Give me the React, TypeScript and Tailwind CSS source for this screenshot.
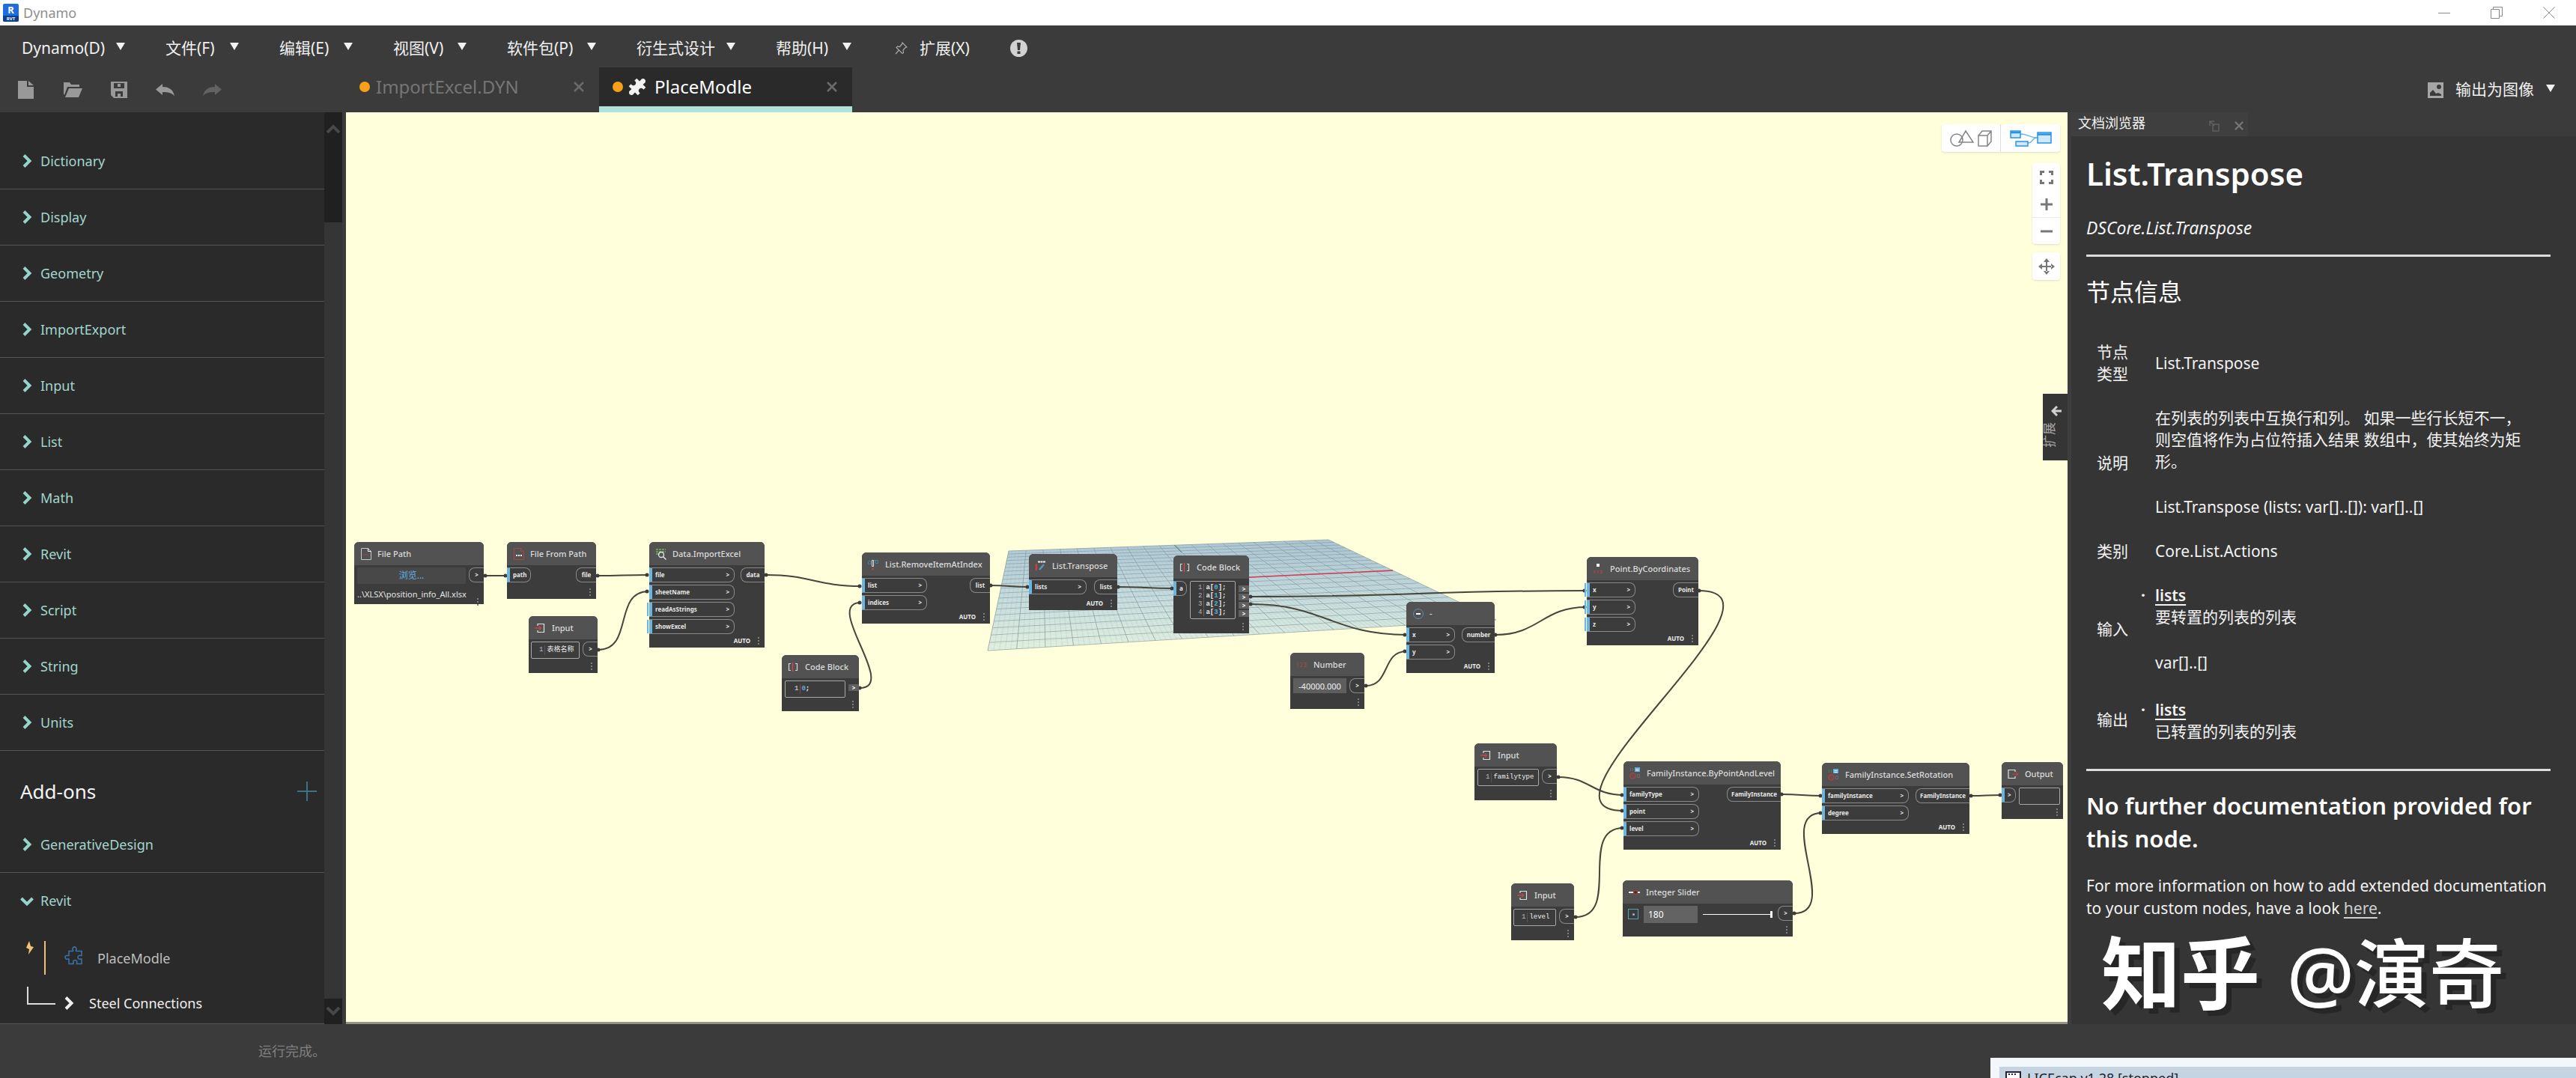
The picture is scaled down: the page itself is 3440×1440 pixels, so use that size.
import type { ReactNode } from 'react';
import clsx from 'clsx';

type Point = [number, number];

const MENUS = [
  { label: 'Dynamo(D)', width: 'min-w-[138px]' },
  { label: '文件(F)', width: 'min-w-[98px]' },
  { label: '编辑(E)', width: 'min-w-[98px]' },
  { label: '视图(V)', width: 'min-w-[98px]' },
  { label: '软件包(P)', width: 'min-w-[119px]' },
  { label: '衍生式设计', width: 'min-w-[132px]' },
  { label: '帮助(H)', width: 'min-w-[101px]' },
];

const LIBRARY = [
  'Dictionary', 'Display', 'Geometry', 'ImportExport', 'Input', 'List',
  'Math', 'Revit', 'Script', 'String', 'Units',
];

// canvas coordinates: output port -> input port
const WIRES: [Point, Point][] = [
  [[186, 619], [215, 619]],
  [[336, 619], [404, 618]],
  [[337, 718], [404, 640]],
  [[561, 618], [688, 633]],
  [[686, 769], [688, 655]],
  [[861, 632], [912, 634]],
  [[1031, 634], [1105, 636]],
  [[1208, 647], [1656, 639]],
  [[1208, 657], [1416, 698]],
  [[1362, 766], [1416, 720]],
  [[1535, 698], [1656, 661]],
  [[1807, 639], [1706, 933]],
  [[1619, 888], [1706, 912]],
  [[1642, 1075], [1706, 956]],
  [[1917, 911], [1971, 913]],
  [[1934, 1070], [1971, 936]],
  [[2170, 913], [2211, 912]],
];

function wirePath([[x1, y1], [x2, y2]]: [Point, Point]) {
  const offset = Math.hypot(x2 - x1, y2 - y1) * 0.46;
  return `M${x1},${y1} C${x1 + offset},${y1} ${x2 - offset},${y2} ${x2},${y2}`;
}

// corners of the background plane: top left, top right, bottom right, bottom left
const PLANE: Point[] = [[885, 586], [1312, 571], [1536, 678], [857, 719]];

// projective map from the unit square to PLANE
function project(u: number, v: number): Point {
  const [[x0, y0], [x1, y1], [x2, y2], [x3, y3]] = PLANE;
  const dx1 = x1 - x2, dx2 = x3 - x2, dx3 = x0 - x1 + x2 - x3;
  const dy1 = y1 - y2, dy2 = y3 - y2, dy3 = y0 - y1 + y2 - y3;
  const det = dx1 * dy2 - dx2 * dy1;
  const g = (dx3 * dy2 - dx2 * dy3) / det;
  const h = (dx1 * dy3 - dx3 * dy1) / det;
  const w = g * u + h * v + 1;
  return [
    ((x1 - x0 + g * x1) * u + (x3 - x0 + h * x3) * v + x0) / w,
    ((y1 - y0 + g * y1) * u + (y3 - y0 + h * y3) * v + y0) / w,
  ];
}

function gridPath(count: number, skip = 0) {
  let d = '';
  for (let i = 0; i <= count; i++) {
    if (skip && i % skip === 0) continue;
    const t = i / count;
    d += `M${project(t, 0)}L${project(t, 1)}M${project(0, t)}L${project(1, t)}`;
  }
  return d;
}

function BackgroundPlane() {
  return (
    <g>
      <defs>
        <linearGradient id="plane" x1="0" y1="0" x2="0" y2="1">
          <stop offset="0" stopColor="#b9d2e6" />
          <stop offset="0.5" stopColor="#d0e4e6" />
          <stop offset="1" stopColor="#ecf8e4" />
        </linearGradient>
      </defs>
      <polygon points={PLANE.join(' ')} fill="url(#plane)" />
      <path d={gridPath(100, 5)} stroke="#9fb9bd" strokeOpacity="0.3" fill="none" />
      <path d={gridPath(20)} stroke="#869c9f" strokeOpacity="0.75" fill="none" />
      <path d="M1106,578 L1116,588" stroke="#4f8a5c" />
      <path d="M1105,626 L1398,612" stroke="#d43a4c" strokeWidth="1.5" />
    </g>
  );
}

function Wires() {
  return (
    <svg className="absolute inset-0 h-full w-full" aria-hidden="true">
      <BackgroundPlane />
      {WIRES.map((w, i) => (
        <g key={i}>
          <path d={wirePath(w)} fill="none" stroke="#46463a" strokeWidth="2" />
          <circle cx={w[0][0]} cy={w[0][1]} r="2.5" fill="#3c3c3c" />
          <circle cx={w[1][0] - 2} cy={w[1][1]} r="2.5" fill="#3c3c3c" />
        </g>
      ))}
    </svg>
  );
}

/* ---------- node icons ---------- */

const FileIcon = ({ red = false }: { red?: boolean }) => (
  <svg width="16" height="18" viewBox="0 0 16 18" fill="none">
    <path d="M1.5 1.5h9l4 4v11h-13z" stroke={red ? '#a84444' : '#c9c9c9'} />
    <path d="M10.5 1.5v4h4" stroke={red ? '#a84444' : '#fff'} />
    {red ? <path d="M4 11h2M7 11h2M10 11h2" stroke="#fff" strokeWidth="2" /> : <path d="M4 10h8" stroke="#8a4a4a" />}
  </svg>
);

const ExcelIcon = () => (
  <svg width="16" height="18" viewBox="0 0 16 18" fill="none">
    <path d="M1 3h13M1 6h13M1 9h5" stroke="#6d9a5c" strokeWidth="2" strokeDasharray="3 1" />
    <circle cx="8" cy="10" r="3.5" stroke="#e8e8e8" strokeWidth="1.3" />
    <path d="M10.5 12.5l4 4" stroke="#e8e8e8" strokeWidth="1.5" />
  </svg>
);

const InputIcon = () => (
  <svg width="14" height="14" viewBox="0 0 14 14" fill="none">
    <path d="M4 4V1.5h8.5v11H4V10" stroke="#e0e0e0" strokeWidth="1.2" />
    <path d="M0 7h8M6 4.5L8.5 7 6 9.5" stroke="#c24848" strokeWidth="1.3" />
  </svg>
);

const OutputIcon = () => (
  <svg width="15" height="14" viewBox="0 0 15 14" fill="none">
    <path d="M10 4V1.5H1v11h9V10" stroke="#e0e0e0" strokeWidth="1.2" />
    <path d="M6 7h7M11 4.5L14 7l-3 2.5" stroke="#b04848" strokeWidth="1.2" />
  </svg>
);

const CodeIcon = () => (
  <svg width="14" height="12" viewBox="0 0 14 12" fill="none">
    <path d="M4 1.5H1.5v9H4M10 1.5h2.5v9H10" stroke="#d8d8d8" strokeWidth="1.2" />
    <path d="M6.5 0v12" stroke="#d04848" strokeWidth="1.5" />
  </svg>
);

const RemoveIcon = () => (
  <svg width="14" height="16" viewBox="0 0 14 16" fill="none">
    <path d="M.5 3.5h3v4h-3zM10.5 2.5h3v4h-3zM8 2.5h2v4" stroke="#3f7fae" />
    <path d="M5.5 2.5h2v8h-2z" stroke="#e0e0e0" />
    <path d="M5 12.5l3 3M8 12.5l-3 3" stroke="#c24848" />
  </svg>
);

const TransposeIcon = () => (
  <svg width="15" height="14" viewBox="0 0 15 14" fill="none">
    <path d="M4 1.5h10" stroke="#eee" strokeWidth="2" strokeDasharray="3 .5" />
    <path d="M2 4v9" stroke="#c24040" strokeWidth="2.5" />
    <path d="M12 5l-6 7" stroke="#5b9cc8" strokeWidth="2" />
  </svg>
);

const MinusIcon = () => (
  <svg width="16" height="16" viewBox="0 0 16 16" fill="none">
    <circle cx="8" cy="8" r="6.5" stroke="#5b8fb5" />
    <path d="M5 8h6" stroke="#fff" strokeWidth="2" />
  </svg>
);

const NumberIcon = () => (
  <svg width="14" height="8" viewBox="0 0 14 8" fill="none" stroke="#9c4a4a">
    <path d="M1 2l1-1v6M5.5 1.5H8V4L5.5 6.5H8M10.5 1.5h2.5v5h-2.5M11 4h2" />
  </svg>
);

const PointIcon = () => (
  <svg width="14" height="14" viewBox="0 0 14 14" fill="none">
    <path d="M5 0h4v4H5z" fill="#fff" />
    <path d="M1 9l3 4M4 9l-3 4M6 9l1 2 1-2M7 11v2M10 9.5h3l-3 3h3" stroke="#9c4a4a" />
  </svg>
);

const FamilyIcon = () => (
  <svg width="15" height="16" viewBox="0 0 15 16" fill="none">
    <path d="M1.5 1v4M4.5 1v4" stroke="#6a6a6a" />
    <path d="M7 0h7v6H7z" fill="#5eaee8" />
    <path d="M8.5 2.5h4M8.5 4.5h4" stroke="#e8f4ff" />
    <circle cx="4.5" cy="11.5" r="3.5" stroke="#b04040" strokeWidth="1.5" />
    <path d="M2 9l5 5" stroke="#b04040" />
    <path d="M10.5 9.5h3v4h-3z" stroke="#6a6a6a" />
  </svg>
);

const SliderIcon = () => (
  <svg width="15" height="6" viewBox="0 0 15 6" fill="none">
    <path d="M0 3h6M12 3h3" stroke="#eee" strokeWidth="2" />
    <circle cx="9" cy="3" r="2.3" fill="#5a1f1f" stroke="#b04040" />
  </svg>
);

/* ---------- node parts ---------- */

function InPort({ label, className, open = false }: { label: string; className: string; open?: boolean }) {
  return (
    <div className={clsx('relative flex h-5 items-center justify-between rounded-r-lg border border-l-4 border-[#8a8a8a] border-l-[#6cb5df] pr-1.5 pl-1 text-[8px] leading-none font-bold text-[#e6e6e6]', className)}>
      {open && <span className="absolute inset-y-0 -left-[7px] w-0.5 bg-[#6cb5df]" />}
      <span>{label}</span>
      {label !== '>' && label !== 'path' && label !== 'a' && <span>&gt;</span>}
    </div>
  );
}

function OutPort({ label = '>', className = 'w-5' }: { label?: string; className?: string }) {
  return (
    <div className={clsx('flex h-5 shrink-0 items-center justify-center rounded-l-lg border border-r-0 border-[#8a8a8a] text-[8px] leading-none font-bold text-[#e6e6e6]', className)}>
      {label}
    </div>
  );
}

function CodeOut() {
  return (
    <div className="flex h-[9px] w-3.5 items-center justify-center bg-[#606060] text-[8px] leading-none font-bold text-white">
      &gt;
    </div>
  );
}

function InputField({ label, value, className }: { label: string; value: string; className: string }) {
  return (
    <label className={clsx('flex h-[23px] items-center gap-0.5 rounded-xs border border-[#a8a8a8] pl-2.5 font-mono text-[9px] text-[#bdbdbd]', className)}>
      1
      <input aria-label={label} defaultValue={value} className="w-full min-w-0 border-l border-[#555] bg-transparent pl-0.5 font-['Liberation_Mono','Noto_Sans_CJK_SC',monospace] text-[#ededed] outline-none" />
    </label>
  );
}

interface NodeProps {
  x: number;
  y: number;
  w: number;
  h: number;
  title: string;
  icon: ReactNode;
  auto?: boolean;
  children: ReactNode;
}

function Node({ x, y, w, h, title, icon, auto = false, children }: NodeProps) {
  return (
    <section
      style={{ left: x, top: y, width: w, height: h }}
      className="absolute flex flex-col rounded-t-md bg-[#3c3c3c]"
    >
      <header className="flex h-[31px] shrink-0 items-center rounded-t-md bg-[#525252] pl-2 text-[#dcdcdc]">
        <span className="flex w-[23px] items-center">{icon}</span>
        <h3 className="text-[11px] leading-none font-medium whitespace-nowrap">{title}</h3>
      </header>
      <div className="flex justify-between pt-[3px]">{children}</div>
      <footer className="mt-auto flex h-[18px] items-center justify-end gap-2.5 pr-[7px] text-[8px] leading-none font-bold text-[#ececec]">
        {auto && <span>AUTO</span>}
        <button aria-label="Node options" className="flex flex-col gap-0.5">
          <i className="size-0.5 bg-[#7d7d7d]" />
          <i className="size-0.5 bg-[#7d7d7d]" />
          <i className="size-0.5 bg-[#7d7d7d]" />
        </button>
      </footer>
    </section>
  );
}

function Graph() {
  return (
    <>
      <Node x={11} y={574} w={173} h={83} title="File Path" icon={<FileIcon />}>
        <div className="flex flex-col pl-1">
          <button className="h-[22px] w-[145px] rounded-xs bg-[#484848] text-[12px] leading-none text-[#62b3e4]">浏览...</button>
          <span className="pt-2 text-[11px] leading-none whitespace-nowrap text-[#e6e6e6]">..\XLSX\position_info_All.xlsx</span>
        </div>
        <OutPort />
      </Node>

      <Node x={215} y={574} w={119} h={76} title="File From Path" icon={<FileIcon red />}>
        <InPort label="path" className="w-8" />
        <OutPort label="file" className="w-[27px]" />
      </Node>

      <Node x={405} y={574} w={154} h={141} title="Data.ImportExcel" icon={<ExcelIcon />} auto>
        <div className="flex flex-col gap-[3px]">
          <InPort label="file" className="w-[114px]" />
          <InPort label="sheetName" className="w-[114px]" />
          <InPort label="readAsStrings" className="w-[114px]" open />
          <InPort label="showExcel" className="w-[114px]" open />
        </div>
        <OutPort label="data" className="w-8" />
      </Node>

      <Node x={244} y={673} w={92} h={76} title="Input" icon={<InputIcon />}>
        <InputField label="Sheet name" value="表格名称" className="ml-[3px] w-[65px]" />
        <OutPort />
      </Node>

      <Node x={582} y={725} w={103} h={75} title="Code Block" icon={<CodeIcon />}>
        <code className="ml-1 flex h-[23px] w-[81px] items-center rounded-xs border border-[#a8a8a8] pl-3 font-['Liberation_Mono',monospace] text-[9px] font-bold text-[#bdbdbd]">
          1<span className="ml-0.5 border-l border-[#8a4a3a] pl-px text-[#5ab0d8]">0</span>
          <span className="text-white">;</span>
        </code>
        <div className="pt-[5px]">
          <CodeOut />
        </div>
      </Node>

      <Node x={689} y={588} w={171} h={95} title="List.RemoveItemAtIndex" icon={<RemoveIcon />} auto>
        <div className="flex flex-col gap-[3px]">
          <InPort label="list" className="w-[87px]" />
          <InPort label="indices" className="w-[87px]" />
        </div>
        <OutPort label="list" className="w-[27px]" />
      </Node>

      <Node x={912} y={590} w={118} h={75} title="List.Transpose" icon={<TransposeIcon />} auto>
        <InPort label="lists" className="w-[77px]" />
        <OutPort label="lists" className="w-[31px]" />
      </Node>

      <Node x={1105} y={592} w={101} h={104} title="Code Block" icon={<CodeIcon />}>
        <InPort label="a" className="w-[18px]" />
        <code className="flex h-[51px] w-[61px] flex-col justify-center rounded-xs border border-[#a8a8a8] pl-2.5 font-['Liberation_Mono',monospace] text-[9px] leading-[11px] font-bold text-[#ededed]">
          {[0, 1, 2, 3].map(n => (
            <span key={n}>
              <span className="mr-0.5 border-r border-[#666] pr-0.5 font-normal text-[#b5b5b5]">{n + 1}</span>
              a[<span className="text-[#5ab0d8]">{n}</span>];
            </span>
          ))}
        </code>
        <div className="flex flex-col gap-0.5 pt-1.5">
          <CodeOut />
          <CodeOut />
          <CodeOut />
          <CodeOut />
        </div>
      </Node>

      <Node x={1416} y={654} w={118} h={95} title="-" icon={<MinusIcon />} auto>
        <div className="flex flex-col gap-[3px]">
          <InPort label="x" className="w-[65px]" />
          <InPort label="y" className="w-[65px]" />
        </div>
        <OutPort label="number" className="w-11" />
      </Node>

      <Node x={1261} y={722} w={99} h={75} title="Number" icon={<NumberIcon />}>
        <input aria-label="Number" defaultValue="-40000.000" className="ml-1 h-5 w-[71px] bg-[#5e5e5e] text-center text-[11px] text-[#f0f0f0] outline-none" />
        <OutPort />
      </Node>

      <Node x={1657} y={594} w={149} h={118} title="Point.ByCoordinates" icon={<PointIcon />} auto>
        <div className="flex flex-col gap-[3px]">
          <InPort label="x" className="w-[65px]" open />
          <InPort label="y" className="w-[65px]" open />
          <InPort label="z" className="w-[65px]" open />
        </div>
        <OutPort label="Point" className="w-[34px]" />
      </Node>

      <Node x={1507} y={843} w={110} h={76} title="Input" icon={<InputIcon />}>
        <InputField label="Family type" value="familytype" className="ml-1 w-[82px]" />
        <OutPort />
      </Node>

      <Node x={1706} y={867} w={210} h={118} title="FamilyInstance.ByPointAndLevel" icon={<FamilyIcon />} auto>
        <div className="flex flex-col gap-[3px]">
          <InPort label="familyType" className="w-[101px]" />
          <InPort label="point" className="w-[101px]" />
          <InPort label="level" className="w-[101px]" />
        </div>
        <OutPort label="FamilyInstance" className="w-[72px]" />
      </Node>

      <Node x={1556} y={1030} w={84} h={76} title="Input" icon={<InputIcon />}>
        <InputField label="Level" value="level" className="ml-[3px] w-[57px]" />
        <OutPort />
      </Node>

      <Node x={1705} y={1026} w={227} h={75} title="Integer Slider" icon={<SliderIcon />}>
        <button aria-label="Slider range" className="mt-1 ml-[7px] flex size-3.5 items-center justify-center border border-[#5c9ab8]">
          <i className="size-[3px] rounded-full bg-[#8ec0da]" />
        </button>
        <input aria-label="Slider value" defaultValue="180" className="h-[23px] w-[72px] bg-[#636363] pl-1.5 text-[12px] text-white outline-none" />
        <input
          type="range"
          aria-label="Integer slider"
          defaultValue={100}
          className="my-[11px] h-px w-[93px] appearance-none bg-white [&::-webkit-slider-thumb]:h-[9px] [&::-webkit-slider-thumb]:w-[3px] [&::-webkit-slider-thumb]:appearance-none [&::-webkit-slider-thumb]:bg-white"
        />
        <OutPort />
      </Node>

      <Node x={1971} y={869} w={197} h={95} title="FamilyInstance.SetRotation" icon={<FamilyIcon />} auto>
        <div className="flex flex-col gap-[3px]">
          <InPort label="familyInstance" className="w-[116px]" />
          <InPort label="degree" className="w-[116px]" />
        </div>
        <OutPort label="FamilyInstance" className="w-[72px]" />
      </Node>

      <Node x={2211} y={868} w={82} h={76} title="Output" icon={<OutputIcon />}>
        <InPort label=">" className="w-[19px]" />
        <input aria-label="Output" className="mr-1 h-[23px] w-[55px] rounded-xs border border-[#a8a8a8] bg-transparent outline-none" />
      </Node>
    </>
  );
}

/* ---------- chrome ---------- */

function Caret() {
  return (
    <svg width="12" height="10" viewBox="0 0 12 10" className="mb-1">
      <path d="M0 0h12L6 10z" fill="#f2f2f2" />
    </svg>
  );
}

function TitleBar() {
  return (
    <div className="flex h-[34px] shrink-0 items-center bg-white">
      <div className="ml-1 flex h-6 w-[21px] flex-col items-center overflow-hidden rounded-xs bg-[#1f6be0] text-white">
        <span className="text-[13px] leading-4 font-bold">R</span>
        <span className="w-full bg-[#0d3f8f] text-center text-[6px] leading-2 font-bold">RVT</span>
      </div>
      <span className="ml-1.5 text-[18px] leading-none text-[#8f8f8f]">Dynamo</span>
      <div className="ml-auto flex gap-[54px] pr-7 text-[#8a8a8a]">
        <button aria-label="Minimize">
          <svg width="16" height="16" fill="none" stroke="currentColor"><path d="M0 8.5h16" /></svg>
        </button>
        <button aria-label="Restore">
          <svg width="16" height="16" fill="none" stroke="currentColor"><path d="M.5 3.5h11v12H.5zM3.5 3.5v-3h12v12h-4" /></svg>
        </button>
        <button aria-label="Close">
          <svg width="16" height="16" fill="none" stroke="currentColor"><path d="M.5.5l15 15M15.5.5l-15 15" /></svg>
        </button>
      </div>
    </div>
  );
}

function MenuBar() {
  return (
    <nav className="flex h-14 shrink-0 items-center gap-[54px] pt-1 pl-[29px] text-[21px] leading-none text-[#f0f0f0]">
      {MENUS.map(m => (
        <button key={m.label} className={clsx('flex items-center justify-between gap-3', m.width)}>
          {m.label}
          <Caret />
        </button>
      ))}
      <button className="ml-1 flex items-center gap-4">
        <svg width="17" height="17" viewBox="0 0 17 17" fill="none" stroke="#a8a8a8" strokeWidth="1.2">
          <path d="M10 1l6 6-2 .5-3 3.5.5 3.5-1.5 1L2 7.5 3.5 6l3 .5L9.5 3zM5.5 11l-4.5 5" />
        </svg>
        扩展(X)
      </button>
      <button aria-label="Notifications" className="flex size-[23px] items-center justify-center rounded-full bg-[#d2d2d2]">
        <svg width="5" height="15" viewBox="0 0 5 15" fill="#3b3b3b"><path d="M0 0h5L4 10H1zM.5 11.5h4V15h-4z" /></svg>
      </button>
    </nav>
  );
}

const PUZZLE = 'M6 6.5h5.5V5a2.5 2.5 0 1 1 4 0v1.5H23v6h-1.5a2.5 2.5 0 1 0 0 4.5H23v6.5h-6.5V22a2.5 2.5 0 1 0-4.5 0v1.5H6V17H4.5a2.5 2.5 0 1 1 0-4.5H6z';
const PUZZLE_SOLID = 'M6 7h5V5a3.2 3.2 0 1 1 6 0v2h5v4a3.2 3.2 0 1 0 0 6v4h-5v2a3.2 3.2 0 1 1-6 0v-2H6v-4a3.2 3.2 0 1 0 0-6z';

function CloseMark({ className = '' }: { className?: string }) {
  return (
    <svg width="14" height="14" viewBox="0 0 14 14" stroke="currentColor" strokeWidth="2.5" className={className}>
      <path d="M1 1l12 12M13 1L1 13" />
    </svg>
  );
}

function ToolBar() {
  return (
    <div className="flex h-[60px] shrink-0 items-stretch">
      <div className="flex w-[462px] items-center gap-[38px] pl-6 text-[#999]">
        <button aria-label="New">
          <svg width="22" height="24" viewBox="0 0 22 24" fill="currentColor"><path d="M0 0h12v8h9v16H0zM14 0l7 6h-7z" /></svg>
        </button>
        <button aria-label="Open">
          <svg width="26" height="20" viewBox="0 0 26 20" fill="currentColor"><path d="M1 0h8l2 3h11v3H6L2 17 1 15zM8 8h18l-5 12H3z" /></svg>
        </button>
        <button aria-label="Save">
          <svg width="22" height="22" viewBox="0 0 22 22" fill="currentColor" fillRule="evenodd">
            <path d="M0 0h22v22H4l-4-4zM4 2v7h14V2zM6 13v7h3v-4h4v4h3v-7zM9 3h4v4H9z" />
          </svg>
        </button>
        <button aria-label="Undo">
          <svg width="25" height="17" viewBox="0 0 25 17" fill="currentColor"><path d="M9 0v4c8 0 14 3 16 12-4-4-8-5-16-5v4L0 7.5z" /></svg>
        </button>
        <button aria-label="Redo" className="text-[#626262]">
          <svg width="25" height="17" viewBox="0 0 25 17" fill="currentColor"><path d="M16 0v4C8 4 2 7 0 16c4-4 8-5 16-5v4l9-7.5z" /></svg>
        </button>
      </div>

      <div role="tablist" className="flex">
        <div role="tab" aria-selected={false} className="flex w-[338px] items-center border-b-8 border-transparent pr-5 pl-[18px] text-[24px] text-[#757575]">
          <i className="mr-2 size-3.5 rounded-full bg-[#f7a11b]" />
          ImportExcel.DYN
          <button aria-label="Close ImportExcel.DYN" className="ml-auto text-[#6b6b6b]"><CloseMark /></button>
        </div>
        <div role="tab" aria-selected className="flex w-[338px] items-center border-b-8 border-[#b0e3db] bg-[#2a2a2a] pr-5 pl-[18px] text-[24px] text-white">
          <i className="mr-1 size-3.5 rounded-full bg-[#f7a11b]" />
          <svg width="30" height="30" viewBox="0 0 28 28" className="mr-2 rotate-45" fill="#f2f2f2"><path d={PUZZLE_SOLID} /></svg>
          PlaceModle
          <button aria-label="Close PlaceModle" className="ml-auto text-[#6b6b6b]"><CloseMark /></button>
        </div>
      </div>

      <button className="ml-auto flex items-center gap-4 pr-7 text-[21px] text-[#f0f0f0]">
        <svg width="21" height="21" viewBox="0 0 21 21">
          <path d="M0 0h21v21H0z" fill="#a6a6a6" />
          <circle cx="15" cy="6" r="3" fill="#3b3b3b" />
          <path d="M3 18v-4l4-4 4 5 3-1 4 2v2z" fill="#3b3b3b" />
        </svg>
        输出为图像
        <Caret />
      </button>
    </div>
  );
}

function Chevron({ down = false }: { down?: boolean }) {
  return (
    <svg width="18" height="18" viewBox="0 0 18 18" fill="none" stroke="currentColor" strokeWidth="4" className={clsx(down && 'rotate-90')}>
      <path d="M5 1.5L12.5 9 5 16.5" />
    </svg>
  );
}

function LibraryRow({ label, open = false }: { label: string; open?: boolean }) {
  return (
    <button className={clsx('flex h-[75px] w-full shrink-0 items-center gap-[9px] pl-[27px] text-[18px] text-[#a3d6cd]', !open && 'border-b border-[#555]')}>
      <span className="text-[#93d5ca]"><Chevron down={open} /></span>
      {label}
    </button>
  );
}

function Library() {
  return (
    <aside className="flex w-[457px] shrink-0 overflow-hidden bg-[#2a2a2a]">
      <div className="flex flex-1 flex-col border-b border-[#555] pt-7">
        {LIBRARY.map(l => <LibraryRow key={l} label={l} />)}
        <div className="flex h-[88px] shrink-0 items-center justify-between pt-6 pr-2.5 pb-1 pl-[27px]">
          <h2 className="text-[26px] leading-none text-[#f4f4f4]">Add-ons</h2>
          <button aria-label="Add">
            <svg width="26" height="26" stroke="#3f7186" strokeWidth="2"><path d="M0 13h26M13 0v26" /></svg>
          </button>
        </div>
        <LibraryRow label="GenerativeDesign" />
        <LibraryRow label="Revit" open />
        <button className="mt-4 flex h-[45px] items-center pl-[35px] text-[18px] text-[#bfbfbf]">
          <svg width="10" height="18" viewBox="0 0 10 18" fill="#f4c27a" className="self-start"><path d="M4 0L0 9l4 2-1 7 7-10-4-1z" /></svg>
          <i className="ml-3.5 h-full w-0.5 bg-[#eebf78]" />
          <svg width="28" height="28" viewBox="0 0 28 28" className="mx-[25px] mr-4 mb-1" fill="none" stroke="#3c74ab" strokeWidth="1.5"><path d={PUZZLE} /></svg>
          <span className="pt-0.5">PlaceModle</span>
        </button>
        <button className="mt-4 flex items-center pl-9 text-[18px] text-[#f0f0f0]">
          <i className="mb-5 h-6 w-[38px] border-b-2 border-l-2 border-[#dcdcdc]" />
          <span className="mr-[18px] ml-[9px]"><Chevron /></span>
          Steel Connections
        </button>
      </div>
      <div className="flex w-6 flex-col items-center bg-[#202020] text-[#484848]">
        <svg width="20" height="12" viewBox="0 0 20 12" fill="none" stroke="currentColor" strokeWidth="4" className="mt-4"><path d="M2 11l8-8 8 8" /></svg>
        <div className="mt-[119px] w-full flex-1 bg-[#353535]" />
        <svg width="20" height="12" viewBox="0 0 20 12" fill="none" stroke="currentColor" strokeWidth="4" className="my-[11px]"><path d="M2 1l8 8 8-8" /></svg>
      </div>
    </aside>
  );
}

function CanvasControls() {
  return (
    <div className="absolute top-4 right-2.5 flex flex-col items-end text-[#777]">
      <div className="flex h-[37px] rounded-sm bg-white shadow">
        <button aria-label="3D view" className="flex w-[79px] items-center justify-center border-r border-[#ddd]">
          <svg width="56" height="24" viewBox="0 0 56 24" fill="none" stroke="#858585" strokeWidth="1.5">
            <circle cx="9" cy="14" r="8" />
            <path d="M21 2l-9 15h19zM38 8h12v14H38zM38 8l5-6h12v14l-5 6M50 8l5-6" />
          </svg>
        </button>
        <button aria-label="Graph view" className="flex w-[79px] items-center justify-center">
          <svg width="56" height="24" viewBox="0 0 56 24" fill="#cfe8fb" stroke="#2793e6" strokeWidth="1.5">
            <path d="M14 6c10 0 12 5 23 5M24 18c8 0 4-7 13-7" fill="none" stroke="#6cb4ea" />
            <path d="M1 2h13v9H1zM8 16h16v6H8zM37 4h18v14H37z" />
            <path d="M1 4h13M37 6.5h18" strokeWidth="2.5" />
          </svg>
        </button>
      </div>
      <div className="mt-[15px] flex w-[37px] flex-col rounded-sm bg-white shadow">
        <button aria-label="Fit" className="flex h-[37px] items-center justify-center">
          <svg width="18" height="18" fill="none" stroke="currentColor" strokeWidth="3"><path d="M1.5 6V1.5H6M12 1.5h4.5V6M16.5 12v4.5H12M6 16.5H1.5V12" /></svg>
        </button>
        <button aria-label="Zoom in" className="flex h-9 items-center justify-center border-b border-[#eee]">
          <svg width="16" height="16" stroke="currentColor" strokeWidth="3"><path d="M0 8h16M8 0v16" /></svg>
        </button>
        <button aria-label="Zoom out" className="flex h-[35px] items-center justify-center">
          <svg width="16" height="16" stroke="currentColor" strokeWidth="3"><path d="M0 8h16" /></svg>
        </button>
      </div>
      <button aria-label="Pan" className="mt-[11px] flex size-[37px] items-center justify-center rounded-sm bg-white shadow">
        <svg width="22" height="22" viewBox="0 0 22 22" fill="currentColor">
          <path d="M10 4h2v14h-2zM4 10h14v2H4zM11 0l4 5H7zM11 22l4-5H7zM0 11l5-4v8zM22 11l-5-4v8z" />
        </svg>
      </button>
    </div>
  );
}

function Workspace() {
  return (
    <main className="relative flex-1 overflow-hidden border-b-[3px] border-[#949486] bg-[#ffffdb]">
      <Wires />
      <Graph />
      <CanvasControls />
      <button className="absolute top-[376px] right-0 flex h-[89px] w-[33px] flex-col items-start gap-2 bg-[#353535] pt-4 text-[17px] leading-none text-[#a5a5a5]">
        <svg width="14" height="14" viewBox="0 0 14 14" fill="none" stroke="#d0d0d0" strokeWidth="3" className="mr-2 self-end"><path d="M14 7H3M8 1L2 7l6 6" /></svg>
        <span className="rotate-180 [text-orientation:sideways] [writing-mode:vertical-rl]">扩展</span>
      </button>
    </main>
  );
}

function PortDoc({ children }: { children: ReactNode }) {
  return (
    <ul>
      <li className="relative">
        <span className="absolute -left-[19px] font-bold">·</span>
        <b className="font-semibold underline decoration-2 underline-offset-4">lists</b>
        <br />
        {children}
      </li>
    </ul>
  );
}

const DOC_ROWS: [string, ReactNode][] = [
  ['节点类型', 'List.Transpose'],
  ['说明', (
    <>
      在列表的列表中互换行和列。 如果一些行长短不一，<br />则空值将作为占位符插入结果 数组中，使其始终为矩<br />形。
      <p className="mt-8">List.Transpose (lists: var[]..[]): var[]..[]</p>
    </>
  )],
  ['类别', 'Core.List.Actions'],
  ['输入', (
    <>
      <PortDoc>要转置的列表的列表</PortDoc>
      <p className="mt-8">var[]..[]</p>
    </>
  )],
  ['输出', <div className="pt-1"><PortDoc>已转置的列表的列表</PortDoc></div>],
];

function DocBrowser() {
  return (
    <aside className="relative w-[679px] shrink-0 border-l-[5px] border-[#3e3e3e] bg-[#353535] text-[#f2f2f2]">
      <div className="flex h-8 bg-[#3b3b3b]">
        <div className="flex w-[236px] items-center bg-[#3f3f3f] pr-1.5 pb-1 pl-[9px] text-[18px] leading-none">
          文档浏览器
          <button aria-label="Undock" className="ml-auto pt-2 text-[#606060]">
            <svg width="14" height="15" viewBox="0 0 14 15" fill="none" stroke="currentColor" strokeWidth="1.5"><path d="M5 5h8v9H5zM1 7V1h6M1 1l6 6" /></svg>
          </button>
          <button aria-label="Close documentation" className="ml-5 pt-2 text-[#777]"><CloseMark className="size-3" /></button>
        </div>
      </div>
      <article className="pt-[22px] pr-[34px] pl-5 text-[21px] leading-[29px]">
        <h1 className="text-[42px] leading-[56px] font-semibold text-white">List.Transpose</h1>
        <p className="mt-[30px] text-[23px] italic">DSCore.List.Transpose</p>
        <hr className="mt-[21px] border-t-[3px] border-[#dcdcdc]" />
        <h2 className="mt-[25px] text-[32px] leading-[44px] text-white">节点信息</h2>
        <table className="mt-[29px] w-full">
          <tbody>
            {DOC_ROWS.map(([label, body]) => (
              <tr key={label}>
                <th scope="row" className="w-[72px] py-[15px] pr-[15px] pl-[14px] text-left font-normal">{label}</th>
                <td className="py-[15px] pl-5">{body}</td>
              </tr>
            ))}
          </tbody>
        </table>
        <hr className="mt-5 border-t-[3px] border-[#dcdcdc]" />
        <h2 className="mt-6 text-[31px] leading-[44px] font-semibold text-white">No further documentation provided for this node.</h2>
        <p className="mt-[26px] leading-[30px]">
          For more information on how to add extended documentation to your custom nodes, have a look{' '}
          <a href="#docs" className="text-[#cfcfcf] underline decoration-2 underline-offset-4">here</a>.
        </p>
      </article>
      <div className="absolute bottom-4 left-10 flex items-center gap-9 leading-none whitespace-nowrap text-white [text-shadow:7px_7px_0_#262626]">
        <span className="text-[106px] font-bold">知乎</span>
        <span className="text-[100px] font-medium">@演奇</span>
      </div>
    </aside>
  );
}

function StatusBar() {
  return (
    <footer className="flex h-[72px] shrink-0 items-start justify-between">
      <span className="mt-[27px] ml-[345px] text-[18px] leading-none text-[#808080]">运行完成。</span>
      <div className="mt-[45px] h-[27px] w-[782px] overflow-hidden border-t-[12px] border-l-[12px] border-[#f3f7fb] bg-[#c6d4e2]">
        <div className="flex items-start gap-2 pt-1.5 pl-2">
          <svg width="21" height="16" viewBox="0 0 21 16"><path d="M1 1h19v15H1z" fill="#fff" stroke="#223" strokeWidth="2" /><path d="M4 4h12" stroke="#226" strokeWidth="2" strokeDasharray="2 2" /></svg>
          <span className="text-[18px] leading-[18px] text-[#1c2430]">LICEcap v1.28 [stopped]</span>
        </div>
      </div>
    </footer>
  );
}

export default function App() {
  return (
    <div className="flex h-screen flex-col overflow-hidden bg-[#3b3b3b] font-['Noto_Sans','Noto_Sans_CJK_SC',sans-serif]">
      <TitleBar />
      <MenuBar />
      <ToolBar />
      <div className="flex min-h-0 flex-1">
        <Library />
        <div className="w-[5px] shrink-0 bg-[#3b3b3b]" />
        <Workspace />
        <DocBrowser />
      </div>
      <StatusBar />
    </div>
  );
}
